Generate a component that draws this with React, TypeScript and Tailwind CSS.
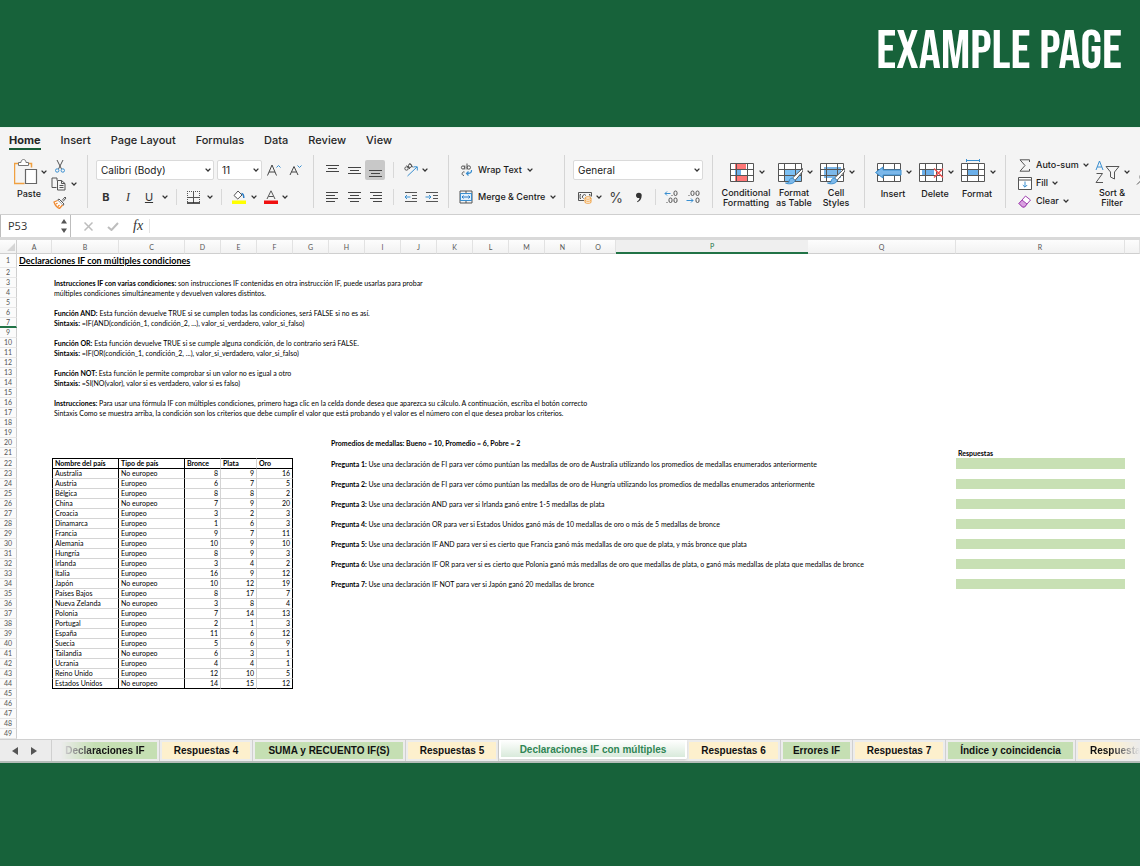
import type { ReactNode } from 'react';

const COLUMNS = [
  { id: 'A', width: 'w-[35px]' },
  { id: 'B', width: 'w-[67px]' },
  { id: 'C', width: 'w-[66px]' },
  { id: 'D', width: 'w-[36px]' },
  { id: 'E', width: 'w-[36px]' },
  { id: 'F', width: 'w-[36px]' },
  { id: 'G', width: 'w-[36px]' },
  { id: 'H', width: 'w-[36px]' },
  { id: 'I', width: 'w-[36px]' },
  { id: 'J', width: 'w-[36px]' },
  { id: 'K', width: 'w-[36px]' },
  { id: 'L', width: 'w-[36px]' },
  { id: 'M', width: 'w-[36px]' },
  { id: 'N', width: 'w-[36px]' },
  { id: 'O', width: 'w-[35px]' },
  { id: 'P', width: 'w-[192px]' },
  { id: 'Q', width: 'w-[148px]' },
  { id: 'R', width: 'w-[169px]' },
  { id: '', width: '' },
];

// row 8 is hidden in the sheet
const ROWS = Array.from({ length: 49 }, (_, i) => i + 1).filter((n) => n !== 8);

type Note = { lead?: string; text?: string };

const NOTES: Record<number, Note> = {
  3: { lead: 'Instrucciones IF con varias condiciones:', text: 'son instrucciones IF contenidas en otra instrucción IF, puede usarlas para probar' },
  4: { text: 'múltiples condiciones simultáneamente y devuelven valores distintos.' },
  6: { lead: 'Función AND:', text: 'Esta función devuelve TRUE si se cumplen todas las condiciones, será FALSE si no es así.' },
  7: { lead: 'Sintaxis:', text: '=IF(AND(condición_1, condición_2, ...), valor_si_verdadero, valor_si_falso)' },
  10: { lead: 'Función OR:', text: 'Esta función devuelve TRUE si se cumple alguna condición, de lo contrario será FALSE.' },
  11: { lead: 'Sintaxis:', text: '=IF(OR(condición_1, condición_2, ...), valor_si_verdadero, valor_si_falso)' },
  13: { lead: 'Función NOT:', text: 'Esta función le permite comprobar si un valor no es igual a otro' },
  14: { lead: 'Sintaxis:', text: '=SI(NO(valor), valor si es verdadero, valor si es falso)' },
  16: { lead: 'Instrucciones:', text: 'Para usar una fórmula IF con múltiples condiciones, primero haga clic en la celda donde desea que aparezca su cálculo. A continuación, escriba el botón correcto' },
  17: { text: 'Sintaxis Como se muestra arriba, la condición son los criterios que debe cumplir el valor que está probando y el valor es el número con el que desea probar los criterios.' },
};

const QUESTIONS: Record<number, Note> = {
  20: { lead: 'Promedios de medallas: Bueno = 10, Promedio = 6, Pobre = 2' },
  22: { lead: 'Pregunta 1:', text: 'Use una declaración de FI para ver cómo puntúan las medallas de oro de Australia utilizando los promedios de medallas enumerados anteriormente' },
  24: { lead: 'Pregunta 2:', text: 'Use una declaración de FI para ver cómo puntúan las medallas de oro de Hungría utilizando los promedios de medallas enumerados anteriormente' },
  26: { lead: 'Pregunta 3:', text: 'Use una declaración AND para ver si Irlanda ganó entre 1-5 medallas de plata' },
  28: { lead: 'Pregunta 4:', text: 'Use una declaración OR para ver si Estados Unidos ganó más de 10 medallas de oro o más de 5 medallas de bronce' },
  30: { lead: 'Pregunta 5:', text: 'Use una declaración IF AND para ver si es cierto que Francia ganó más medallas de oro que de plata, y más bronce que plata' },
  32: { lead: 'Pregunta 6:', text: 'Use una declaración IF OR para ver si es cierto que Polonia ganó más medallas de oro que medallas de plata, o ganó más medallas de plata que medallas de bronce' },
  34: { lead: 'Pregunta 7:', text: 'Use una declaración IF NOT para ver si Japón ganó 20 medallas de bronce' },
};

const MEDALS_TOP = 22;
const MEDALS = [
  ['Nombre del país', 'Tipo de país', 'Bronce', 'Plata', 'Oro'],
  ['Australia', 'No europeo', '8', '9', '16'],
  ['Austria', 'Europeo', '6', '7', '5'],
  ['Bélgica', 'Europeo', '8', '8', '2'],
  ['China', 'No europeo', '7', '9', '20'],
  ['Croacia', 'Europeo', '3', '2', '3'],
  ['Dinamarca', 'Europeo', '1', '6', '3'],
  ['Francia', 'Europeo', '9', '7', '11'],
  ['Alemania', 'Europeo', '10', '9', '10'],
  ['Hungría', 'Europeo', '8', '9', '3'],
  ['Irlanda', 'Europeo', '3', '4', '2'],
  ['Italia', 'Europeo', '16', '9', '12'],
  ['Japón', 'No europeo', '10', '12', '19'],
  ['Países Bajos', 'Europeo', '8', '17', '7'],
  ['Nueva Zelanda', 'No europeo', '3', '8', '4'],
  ['Polonia', 'Europeo', '7', '14', '13'],
  ['Portugal', 'Europeo', '2', '1', '3'],
  ['España', 'Europeo', '11', '6', '12'],
  ['Suecia', 'Europeo', '5', '6', '9'],
  ['Tailandia', 'No europeo', '6', '3', '1'],
  ['Ucrania', 'Europeo', '4', '4', '1'],
  ['Reino Unido', 'Europeo', '12', '10', '5'],
  ['Estados Unidos', 'No europeo', '14', '15', '12'],
];

// The outer tabs fade out where the strip is scrolled
const SHEETS = [
  { name: 'Declaraciones IF', box: 'w-[96px] ml-[7px] pr-2 bg-[#c5dfb3] [mask-image:linear-gradient(to_right,transparent,black_35%)]' },
  { name: 'Respuestas 4', box: 'w-[88px] bg-[#fdf0cd]' },
  { name: 'SUMA y RECUENTO IF(S)', box: 'w-[148px] bg-[#c5dfb3]' },
  { name: 'Respuestas 5', box: 'w-[88px] bg-[#fdf0cd]' },
  { name: 'Declaraciones IF con múltiples', active: true, box: 'w-[188px]' },
  { name: 'Respuestas 6', box: 'w-[89px] bg-[#fdf0cd]' },
  { name: 'Errores IF', box: 'w-[67px] bg-[#c5dfb3]' },
  { name: 'Respuestas 7', box: 'w-[88px] bg-[#fdf0cd]' },
  { name: 'Índice y coincidencia', box: 'w-[125px] bg-[#c5dfb3]' },
  { name: 'Respuesta', box: 'w-[62px] pl-3 text-left bg-[#fdf0cd] [mask-image:linear-gradient(to_right,black_50%,transparent)]' },
];

const MENU = ['Home', 'Insert', 'Page Layout', 'Formulas', 'Data', 'Review', 'View'];

function Chevron({ className = '' }: { className?: string }) {
  return (
    <svg viewBox="0 0 6 4" className={`h-1 w-1.5 shrink-0 ${className}`} fill="none" stroke="#333" strokeWidth="1.3">
      <path d="M.6.6 3 3 5.4.6" />
    </svg>
  );
}

function Divider() {
  return <span className="h-4 w-px shrink-0 bg-[#d8d8d8]" />;
}

function Group({ className, children }: { className: string; children: ReactNode }) {
  return <div className={`flex shrink-0 border-r border-[#d5d5d5] ${className}`}>{children}</div>;
}

function Tool({ label, className, children }: { label: string; className: string; children: ReactNode }) {
  return (
    <button type="button" aria-label={label} className={`flex h-5 shrink-0 items-center justify-center ${className}`}>
      {children}
    </button>
  );
}

function Picker({ label, value, className }: { label: string; value: string; className: string }) {
  return (
    <div className={`relative h-5 shrink-0 ${className}`}>
      <select
        aria-label={label}
        defaultValue={value}
        className="block h-5 w-full appearance-none rounded-xs border border-[#dadada] bg-white pl-1 text-[10px] leading-4 text-[#1a1a1a]"
      >
        <option>{value}</option>
      </select>
      <Chevron className="pointer-events-none absolute top-2 right-[3px]" />
    </div>
  );
}

function BigTool({ lines, className, children }: { lines: string[]; className: string; children: ReactNode }) {
  return (
    <button type="button" className={`flex shrink-0 flex-col items-center ${className}`}>
      <span className="flex h-[34px] items-center gap-1">
        {children}
        <Chevron />
      </span>
      <span className="text-[9px] leading-[10px] font-medium whitespace-nowrap text-[#1a1a1a]">
        {lines.map((line) => (
          <span key={line} className="block">{line}</span>
        ))}
      </span>
    </button>
  );
}

// Horizontal strokes given as [x1, x2] pairs, 3px apart
function Lines({ rows, top = 2 }: { rows: number[][]; top?: number }) {
  return (
    <svg viewBox="0 0 13 13" className="h-[13px] w-[13px]" stroke="#444" strokeWidth="1">
      {rows.map(([a, b], i) => (
        <path key={i} d={`M${a} ${top + i * 3 - 0.5}H${b}`} />
      ))}
    </svg>
  );
}

function GridIcon({ children, overlay }: { children: ReactNode; overlay?: ReactNode }) {
  return (
    <svg viewBox="0 0 28 26" className="h-[26px] w-7 shrink-0" fill="none">
      <path d="M3.5 4.5h23v18h-23z" fill="#fff" />
      {children}
      <path d="M3.5 4.5h23v18h-23zM3.5 10.5h23M3.5 16.5h23M9.5 4.5v18M20.5 4.5v18" stroke="#555" strokeWidth="1" />
      {overlay}
    </svg>
  );
}

function BrushOverlay() {
  return (
    <>
      <path d="M27.5 9.5 17.5 19l2.5 2.5L28 12z" fill="#fff" stroke="#555" />
      <path d="M17.5 19c-3 0-3.5 3-3.5 4-1 1-2.5 1-3.5 1 3 1.5 9 1 9.5-2.5z" fill="#7cb8ea" stroke="#3a8fd0" />
    </>
  );
}

function Ribbon() {
  return (
    <div className="bg-[#f4f4f4] font-['Inter',sans-serif]">
      <nav className="flex h-[26px] gap-5 overflow-hidden border-t border-[#e8f3ec] pl-[9px]">
        {MENU.map((item) => (
          <a
            key={item}
            href="#"
            className={`h-[22px] shrink-0 border-b-2 pt-1 text-[11px] leading-4 whitespace-nowrap text-[#262626] ${
              item === 'Home' ? 'border-[#185c37] font-bold' : 'border-transparent font-medium'
            }`}
          >
            {item}
          </a>
        ))}
      </nav>

      <div className="flex h-[62px] overflow-hidden border-b border-[#cfcfcf] pt-[2px] pb-[6px]">
        {/* Clipboard */}
        <Group className="w-[88px] pl-[14px]">
          <button type="button" className="flex w-[34px] flex-col items-start">
            <span className="flex h-[34px] items-center gap-[3px]">
              <svg viewBox="0 0 24 27" className="h-[27px] w-6 shrink-0" fill="none">
                <path d="M5.5 4.5h-5v20h10M13.5 4.5h4v4" stroke="#f0a040" strokeWidth="1.5" />
                <path d="M4.5 6.5v-3h2.5c0-4 5-4 5 0h2.5v3z" fill="#fff" stroke="#777" />
                <path d="M11.5 10.5h11v14h-11z" fill="#fff" stroke="#666" strokeWidth="1.2" />
              </svg>
              <Chevron />
            </span>
            <span className="pl-[3px] text-[9px] leading-[10px] font-medium text-[#1a1a1a]">Paste</span>
          </button>
          <div className="flex w-[32px] flex-col items-start -space-y-0.5 pt-px pl-1">
            <Tool label="Cut" className="w-4">
              <svg viewBox="0 0 12 14" className="h-3.5 w-3" fill="none">
                <path d="M3 1l4.5 9M9 1 4.5 10" stroke="#555" />
                <circle cx="3.2" cy="11.5" r="1.7" stroke="#3a8fd0" />
                <circle cx="8.8" cy="11.5" r="1.7" stroke="#3a8fd0" />
              </svg>
            </Tool>
            <Tool label="Copy" className="w-6 gap-1">
              <svg viewBox="0 0 16 14" className="h-3.5 w-4 shrink-0" fill="none" stroke="#555">
                <path d="M6 3.5V1H1v9.5h4.5" />
                <path d="M6.5 3.5h4l3.5 3v6.5H6.5zM10.5 3.5v3H14M8.5 8.5h4M8.5 10.5h4" />
              </svg>
              <Chevron />
            </Tool>
            <Tool label="Format Painter" className="w-4">
              <svg viewBox="0 0 14 13" className="h-[13px] w-3.5" fill="none">
                <path d="M9 4.5 12 1l1 1-3 3.5M6 3l5 5-1 1.5L4.5 4z" fill="#fff" stroke="#555" />
                <path d="M4.5 4.5 1 6c1 3 3 5.5 5.5 6.5L9.5 9M3 8l1.5-1M5 10.5l1.5-1.5" fill="#fff" stroke="#f08a30" strokeWidth="1.3" />
              </svg>
            </Tool>
          </div>
        </Group>

        {/* Font */}
        <Group className="w-[226px] flex-col gap-[7px] pt-[5px] pl-2">
          <div className="flex">
            <Picker label="Font" value="Calibri (Body)" className="w-[118px]" />
            <Picker label="Font size" value="11" className="ml-[3px] w-[45px]" />
            <Tool label="Increase font size" className="ml-[2px] w-[19px]">
              <svg viewBox="0 0 14 14" className="h-3.5 w-3.5" fill="none">
                <path d="M.5 12.5 5 2l4.5 10.5M2 9h6" stroke="#444" />
                <path d="m9.5 4.5 2-2 2 2" stroke="#3a8fd0" />
              </svg>
            </Tool>
            <Tool label="Decrease font size" className="ml-[3px] w-[19px]">
              <svg viewBox="0 0 14 14" className="h-3.5 w-3.5" fill="none">
                <path d="M1 12 5 3.5 9 12M2.5 9h5" stroke="#444" />
                <path d="m8.5 2.5 2 2 2-2" stroke="#3a8fd0" />
              </svg>
            </Tool>
          </div>
          <div className="flex items-center">
            <Tool label="Bold" className="w-5 text-[11px] font-bold text-[#333]">B</Tool>
            <Tool label="Italic" className="w-6 font-['Liberation_Serif',serif] text-[12px] text-[#333] italic">I</Tool>
            <Tool label="Underline" className="w-[18px] text-[11px] text-[#333] underline">U</Tool>
            <Tool label="Underline options" className="w-3.5"><Chevron /></Tool>
            <span className="flex w-2 justify-center"><Divider /></span>
            <Tool label="Borders" className="w-[26px]">
              <svg viewBox="0 0 13 13" className="h-[13px] w-[13px]" fill="none" stroke="#555">
                <path d="M.5 0v12M12.5 0v12M0 .5h13" strokeDasharray="1 1" />
                <path d="M6.5 1v11M1 6.5h11" />
                <path d="M0 12h13" stroke="#222" strokeWidth="1.5" />
              </svg>
            </Tool>
            <Tool label="Border options" className="w-2"><Chevron /></Tool>
            <span className="flex w-3.5 justify-center"><Divider /></span>
            <Tool label="Fill colour" className="w-[22px]">
              <svg viewBox="0 0 14 14" className="h-3.5 w-3.5" fill="none">
                <path d="M6 1 10 5 5.8 9 2 5.5z" fill="#fff" stroke="#555" />
                <path d="M9.5 3.5c1.8.3 2.3 2 2.3 4.5" stroke="#2a7cc7" strokeWidth="1.5" />
                <path d="M0 10.5h14V14H0z" fill="#ffff00" />
              </svg>
            </Tool>
            <Tool label="Fill options" className="w-2"><Chevron /></Tool>
            <Tool label="Font colour" className="ml-[3px] w-5">
              <svg viewBox="0 0 14 14" className="h-3.5 w-3.5" fill="none">
                <path d="M3 9 7 .8 11 9M4.5 6.5h5" stroke="#555" />
                <path d="M0 10.5h14V14H0z" fill="#f01010" />
              </svg>
            </Tool>
            <Tool label="Font colour options" className="w-2"><Chevron /></Tool>
          </div>
        </Group>

        {/* Alignment */}
        <Group className="w-[135px] flex-col gap-[7px] pt-[5px] pl-[7px]">
          <div className="flex items-center">
            <Tool label="Top align" className="w-[22px]"><Lines top={2} rows={[[0, 13], [2, 11], [0, 13]]} /></Tool>
            <Tool label="Middle align" className="w-[22px]"><Lines top={4} rows={[[0, 13], [2, 11], [0, 13]]} /></Tool>
            <Tool label="Bottom align" className="w-5 rounded-xs bg-[#c8c8c8]"><Lines top={7} rows={[[0, 13], [2, 11], [0, 13]]} /></Tool>
            <span className="flex w-4 justify-center"><Divider /></span>
            <Tool label="Orientation" className="w-5">
              <svg viewBox="0 0 16 14" className="h-3.5 w-4" fill="none">
                <g stroke="#555">
                  <circle cx="3.5" cy="5.5" r="1.7" />
                  <path d="M3.5 2.5 7 6" />
                  <circle cx="7" cy="2.8" r="1.7" />
                  <path d="M6.5 0 10 4.5" />
                </g>
                <path d="M4.5 13 14 4M10.5 3.8H14.3V7.5" stroke="#3a8fd0" />
              </svg>
            </Tool>
            <Tool label="Orientation options" className="w-2"><Chevron /></Tool>
          </div>
          <div className="flex items-center">
            <Tool label="Align left" className="w-[22px]"><Lines rows={[[0, 12], [0, 9], [0, 12], [0, 9]]} /></Tool>
            <Tool label="Align centre" className="w-[22px]"><Lines rows={[[0, 13], [2, 11], [0, 13], [2, 11]]} /></Tool>
            <Tool label="Align right" className="w-5"><Lines rows={[[1, 13], [4, 13], [1, 13], [4, 13]]} /></Tool>
            <span className="flex w-4 justify-center"><Divider /></span>
            <Tool label="Decrease indent" className="w-5">
              <svg viewBox="0 0 14 13" className="h-[13px] w-3.5" fill="none">
                <path d="M1 1.5h12M8 4.5h5M8 7.5h5M1 10.5h12" stroke="#555" />
                <path d="M6.5 6H1M3 4 1 6l2 2" stroke="#3a8fd0" />
              </svg>
            </Tool>
            <Tool label="Increase indent" className="w-[22px]">
              <svg viewBox="0 0 14 13" className="h-[13px] w-3.5" fill="none">
                <path d="M1 1.5h12M8 4.5h5M8 7.5h5M1 10.5h12" stroke="#555" />
                <path d="M.5 6H6M4 4l2 2-2 2" stroke="#3a8fd0" />
              </svg>
            </Tool>
          </div>
        </Group>

        <Group className="w-[116px] flex-col gap-[7px] pt-[5px] pl-[10px] text-[9px] font-medium text-[#1a1a1a]">
          <button type="button" className="flex h-5 items-center gap-[5px] whitespace-nowrap">
            <svg viewBox="0 0 14 14" className="h-3.5 w-3.5 shrink-0" fill="none">
              <g stroke="#555">
                <circle cx="4" cy="4.5" r="1.6" />
                <path d="M5.8 2.5v4M8 .5v6" />
                <circle cx="9.8" cy="4.5" r="1.7" />
                <path d="M5.5 9c-2.5-1-3.5 3.5-.5 3.5" />
              </g>
              <path d="M12.5 7c.5 2.5-1.5 3.5-5 3.5M9.5 8.5l-2 2 2 2" stroke="#3a8fd0" strokeWidth="1.2" />
            </svg>
            Wrap Text
            <Chevron />
          </button>
          <button type="button" className="flex h-5 items-center gap-[5px] whitespace-nowrap">
            <svg viewBox="0 0 14 14" className="h-3.5 w-3.5 shrink-0" fill="none">
              <path d="M1 1h12v12H1zM7 1v2M7 11v2M1 3.5h12M1 10.5h12" stroke="#555" />
              <path d="M1.5 3.5h11v7h-11z" fill="#e2f0fb" stroke="#3a8fd0" />
              <path d="M3 7h8M4.5 5.5 3 7l1.5 1.5M9.5 5.5 11 7 9.5 8.5" stroke="#2a7cc7" />
            </svg>
            Merge &amp; Centre
            <Chevron />
          </button>
        </Group>

        {/* Number */}
        <Group className="w-[148px] flex-col gap-[7px] pt-[5px] pl-2">
          <Picker label="Number format" value="General" className="w-[130px]" />
          <div className="flex items-center">
            <Tool label="Currency" className="w-[22px]">
              <svg viewBox="0 0 15 13" className="h-[13px] w-[15px]" fill="none">
                <path d="M7 9.5H1.5v-8h13v4M4 3.5H3v4h1M6.5 7.5a2 2 0 1 1 2.5-3M12 3.5h1v2" stroke="#555" />
                <path d="M8 7v4.5c1 1 5 1 6 0V7M8 9.5c1 1 5 1 6 0" fill="#fff" stroke="#f0a040" />
                <ellipse cx="11" cy="7" rx="3" ry="1.2" fill="#fff" stroke="#f0a040" />
              </svg>
            </Tool>
            <Tool label="Currency options" className="w-2"><Chevron /></Tool>
            <Tool label="Percent style" className="w-[26px] text-[14px] text-[#444]">%</Tool>
            <Tool label="Comma style" className="w-[19px]">
              <svg viewBox="0 0 8 11" className="h-[11px] w-2" fill="#333">
                <path d="M1 3.5a2.8 2.8 0 0 1 5.7 0C6.7 7 4.5 9.5 2.5 10.2l-.5-.7C3.5 8.5 4.3 7.5 4.5 6 2.5 6.5 1 5.2 1 3.5z" />
              </svg>
            </Tool>
            <span className="flex w-3.5 justify-center"><Divider /></span>
            <Tool label="Increase decimal" className="w-[18px]">
              <svg viewBox="0 0 14 14" className="h-3.5 w-3.5" fill="none">
                <g stroke="#555">
                  <rect x="10" y="1" width="3" height="4.5" rx="1.5" />
                  <rect x="5" y="8" width="3" height="4.5" rx="1.5" />
                  <rect x="10" y="8" width="3" height="4.5" rx="1.5" />
                  <path d="M2.5 12.5h1M7.5 5.5h1" />
                </g>
                <path d="M6.5 3.5H1M3 1.5l-2 2 2 2" stroke="#3a8fd0" />
              </svg>
            </Tool>
            <Tool label="Decrease decimal" className="ml-1 w-[18px]">
              <svg viewBox="0 0 14 14" className="h-3.5 w-3.5" fill="none">
                <g stroke="#555">
                  <rect x="5" y="1" width="3" height="4.5" rx="1.5" />
                  <rect x="10" y="1" width="3" height="4.5" rx="1.5" />
                  <rect x="10" y="8" width="3" height="4.5" rx="1.5" />
                  <path d="M2.5 5.5h1" />
                </g>
                <path d="M.5 10.5H7M5 8.5l2 2-2 2" stroke="#3a8fd0" />
              </svg>
            </Tool>
          </div>
        </Group>

        {/* Styles */}
        <Group className="w-[152px] pl-2">
          <BigTool lines={['Conditional', 'Formatting']} className="w-[50px]">
            <GridIcon>
              <path d="M8 5h11v6H8zM8 16.5h13V22H8z" fill="#f77" />
              <path d="M8 11h6v5.5H8z" fill="#6cb0ea" />
            </GridIcon>
          </BigTool>
          <BigTool lines={['Format', 'as Table']} className="w-[46px]">
            <GridIcon overlay={<BrushOverlay />}>
              <path d="M9.5 10.5h17v12h-17z" fill="#7cc0f4" />
            </GridIcon>
          </BigTool>
          <BigTool lines={['Cell', 'Styles']} className="w-[38px]">
            <GridIcon overlay={<BrushOverlay />}>
              <path d="M7 8h17v11H7z" fill="#7cb8ea" />
            </GridIcon>
          </BigTool>
        </Group>

        {/* Cells */}
        <Group className="w-[141px] pl-[7px]">
          <BigTool lines={['Insert']} className="w-[42px]">
            <GridIcon overlay={<path d="M27 11v5H9v3l-7.5-5.5L9 8v3z" fill="#7cb8ea" stroke="#3a8fd0" />}>{null}</GridIcon>
          </BigTool>
          <BigTool lines={['Delete']} className="w-[42px]">
            <GridIcon overlay={<path d="M18 9.5l9 9M27 9.5l-9 9" stroke="#f05050" strokeWidth="1.3" />}>
              <path d="M6 10.5h12v6H6z" fill="#6cb0ea" />
            </GridIcon>
          </BigTool>
          <BigTool lines={['Format']} className="w-[42px]">
            <GridIcon overlay={<path d="M8.5 1.5h13M8.5 0v3M21.5 0v3" stroke="#3a8fd0" />}>
              <path d="M9.5 10.5h11v6h-11z" fill="#6cb0ea" />
            </GridIcon>
          </BigTool>
        </Group>

        {/* Editing */}
        <div className="flex shrink-0 pl-3">
          <div className="flex w-[74px] flex-col pt-px text-[9px] font-medium text-[#1a1a1a]">
            <button type="button" className="flex h-[18px] shrink-0 items-center gap-1 whitespace-nowrap">
              <svg viewBox="0 0 14 13" className="h-[13px] w-3.5 shrink-0" fill="none" stroke="#555">
                <path d="M11.5 3V.8H2L7 6.5 2 12.2h9.5V10" />
              </svg>
              Auto-sum
              <Chevron />
            </button>
            <button type="button" className="flex h-[18px] shrink-0 items-center gap-1 whitespace-nowrap">
              <svg viewBox="0 0 14 13" className="h-[13px] w-3.5 shrink-0" fill="none">
                <path d="M.5.5h13v12H.5zM.5 3h13" fill="#fff" stroke="#555" />
                <path d="M7 4.5V10M4.8 8 7 10.2 9.2 8" stroke="#3a8fd0" />
              </svg>
              Fill
              <Chevron />
            </button>
            <button type="button" className="flex h-[18px] shrink-0 items-center gap-1 whitespace-nowrap">
              <svg viewBox="0 0 14 13" className="h-[13px] w-3.5 shrink-0" fill="none" stroke="#a040b0">
                <path d="M7.5 1 12.5 5 6.5 12h-2L1 8.5z" fill="#fff" />
                <path d="M4 5 9 9l-2.5 3h-2L1 8.5z" fill="#d9a0e0" />
              </svg>
              Clear
              <Chevron />
            </button>
          </div>
          <BigTool lines={['Sort &', 'Filter']} className="w-[40px]">
            <svg viewBox="0 0 25 26" className="h-[26px] w-[25px] shrink-0" fill="none">
              <path d="M1 11 4.5 2 8 11M2.2 8h4.6" stroke="#3a8fd0" />
              <path d="M1.5 14.5h6L1 23.5h7" stroke="#555" />
              <path d="M11 7.5h13L19.5 13v7L15.5 18v-5z" stroke="#555" />
            </svg>
          </BigTool>
          <svg viewBox="0 0 14 26" className="ml-1 h-[54px] w-3.5 shrink-0" fill="none" stroke="#555">
            <circle cx="9" cy="8" r="5" />
            <path d="M5.5 11 1 15.5" />
          </svg>
        </div>
      </div>
    </div>
  );
}

function FormulaBar() {
  return (
    <div className="flex h-[25px] items-center border-b-3 border-[#d9d9d9] bg-white">
      <div className="flex h-full w-[71px] shrink-0 items-center justify-between border-r border-l border-[#bdbdbd] pr-[3px] pl-[7px]">
        <input
          aria-label="Name box"
          defaultValue="P53"
          className="w-10 bg-transparent font-['Open_Sans',sans-serif] text-[11px] text-[#333] outline-none"
        />
        <svg viewBox="0 0 6 14" className="h-3.5 w-1.5" fill="#555">
          <path d="M3 0 6 4.5H0zM3 14 0 9.5h6z" />
        </svg>
      </div>
      <div className="flex h-full shrink-0 items-center gap-[14px] pl-[13px]">
        <button type="button" aria-label="Cancel">
          <svg viewBox="0 0 9 9" className="block h-[9px] w-[9px]" stroke="#bdbdbd" strokeWidth="1.5">
            <path d="m.5.5 8 8M8.5.5l-8 8" />
          </svg>
        </button>
        <button type="button" aria-label="Enter">
          <svg viewBox="0 0 12 9" className="block h-[9px] w-3" fill="none" stroke="#bdbdbd" strokeWidth="2">
            <path d="m1 5 3.5 3L11 1" />
          </svg>
        </button>
        <button type="button" aria-label="Insert function" className="font-['Liberation_Serif',serif] text-[14px] leading-4 text-[#333] italic">
          fx
        </button>
      </div>
      <input aria-label="Formula" className="ml-[6px] h-3.5 min-w-0 flex-1 border-l border-[#e4e4e4] bg-transparent outline-none" />
    </div>
  );
}

function NoteText({ note }: { note: Note }) {
  return (
    <>
      {note.lead && <b>{note.lead}</b>}
      {note.lead && note.text && ' '}
      {note.text}
    </>
  );
}

function Cell({ row, col }: { row: number; col: string }) {
  const medal = MEDALS[row - MEDALS_TOP];
  const field = ['B', 'C', 'D', 'E', 'F'].indexOf(col);

  if (medal && field >= 0) {
    const isHead = row === MEDALS_TOP;
    const isLast = row === MEDALS_TOP + MEDALS.length - 1;
    const classes = [
      'h-[10px] overflow-hidden border-b px-[2px] py-0 leading-[9px]',
      isHead ? 'border-t border-t-black text-left font-bold' : 'font-normal',
      isHead || isLast ? 'border-b-black' : 'border-b-[#d4d4d4]',
      field === 0 ? 'border-l border-l-black' : '',
      col === 'D' || col === 'E' ? 'border-r border-r-[#d4d4d4]' : 'border-r border-r-black',
      !isHead && field > 1 ? 'text-right' : 'text-left',
    ].join(' ');
    return isHead ? <th scope="col" className={classes}>{medal[field]}</th> : <td className={classes}>{medal[field]}</td>;
  }

  let content: ReactNode = null;
  let extra = '';
  if (row === 1 && col === 'A') {
    content = <b className="text-[9px] leading-[12px] underline">Declaraciones IF con múltiples condiciones</b>;
  } else if (col === 'B' && NOTES[row]) {
    content = <NoteText note={NOTES[row]} />;
  } else if (col === 'H' && QUESTIONS[row]) {
    content = <NoteText note={QUESTIONS[row]} />;
  } else if (col === 'R' && row === 21) {
    content = <b>Respuestas</b>;
  } else if (col === 'R' && row > 21 && QUESTIONS[row]) {
    extra = 'bg-[#c8e0b4]';
  }
  return <td className={`px-[2px] py-0 whitespace-nowrap ${extra}`}>{content}</td>;
}

function Sheet() {
  return (
    <div className="overflow-hidden bg-white">
      <table className="w-full table-fixed border-separate border-spacing-0 font-['Lato',sans-serif] text-[7px] leading-[10px] text-black">
        <thead>
          <tr className="h-[14px] bg-linear-to-b from-[#fdfdfd] to-[#f1f1f1] text-[#555]">
            <th className="w-[17px] border-r border-b border-[#cfcfcf] p-0">
              <svg viewBox="0 0 10 10" className="ml-auto h-2.5 w-2.5" fill="#d5d5d5">
                <path d="M9 1v8H1z" />
              </svg>
            </th>
            {COLUMNS.map(({ id, width }) => (
              <th
                key={id}
                scope="col"
                className={`${width} p-0 font-normal ${
                  id === 'P'
                    ? 'border-b-2 border-[#217346] bg-[#efefef] text-[#217346]'
                    : 'border-r border-b border-[#cfcfcf] border-r-[#e2e2e2]'
                }`}
              >
                {id}
              </th>
            ))}
          </tr>
        </thead>
        <tbody>
          {ROWS.map((row) => (
            <tr key={row} className={row === 1 ? 'h-[14px]' : 'h-[10px]'}>
              <th
                scope="row"
                className={`border-r border-r-[#cfcfcf] bg-[#fbfbfb] p-0 font-normal text-[#555] ${
                  row === 7 ? 'border-b-2 border-b-[#217346] leading-[8px]' : 'border-b border-b-[#e8e8e8] leading-[9px]'
                }`}
              >
                {row}
              </th>
              {COLUMNS.map(({ id }) => (
                <Cell key={id} row={row} col={id} />
              ))}
            </tr>
          ))}
        </tbody>
      </table>
    </div>
  );
}

function SheetTabs() {
  return (
    <div className="flex h-6 overflow-hidden border-t border-b-2 border-t-[#d0d0d0] border-b-[#b4bdb8] bg-[#ececec] font-['Liberation_Sans',sans-serif] text-[10px] font-bold text-[#111]">
      <div className="flex w-[51px] shrink-0 items-center gap-[13px] pl-3">
        <button type="button" aria-label="Previous sheet">
          <svg viewBox="0 0 6 8" className="block h-2 w-1.5" fill="#555"><path d="M6 0v8L0 4z" /></svg>
        </button>
        <button type="button" aria-label="Next sheet">
          <svg viewBox="0 0 6 8" className="block h-2 w-1.5" fill="#555"><path d="M0 0v8l6-4z" /></svg>
        </button>
      </div>
      <div className="flex min-w-0 flex-1 overflow-hidden border-l border-[#d0d0d0]">
        {SHEETS.map(({ name, box, active }) =>
          active ? (
            <button
              key={name}
              type="button"
              className={`h-[19px] shrink-0 rounded-b-xs border-2 border-t-0 border-white bg-linear-to-b from-white to-[#d9eadb] pt-[3px] leading-[14px] whitespace-nowrap text-[#2f8554] shadow-sm ${box}`}
            >
              {name}
            </button>
          ) : (
            <div key={name} className="flex shrink-0 border-r border-[#d0d0d0] px-[2px] last:border-r-0 last:pr-0">
              <button type="button" className={`mt-[2px] h-[17px] shrink-0 whitespace-nowrap ${box}`}>
                {name}
              </button>
            </div>
          ),
        )}
      </div>
    </div>
  );
}

export default function App() {
  return (
    <div className="flex min-h-screen flex-col bg-[#17623a]">
      <header className="flex h-[127px] justify-end pt-[22px] pr-[18px]">
        <h1 className="font-['Bebas_Neue','Roboto',sans-serif] text-[55px] leading-[60px] font-normal whitespace-nowrap text-white">
          EXAMPLE PAGE
        </h1>
      </header>
      <main>
        <Ribbon />
        <FormulaBar />
        <Sheet />
        <SheetTabs />
      </main>
    </div>
  );
}
